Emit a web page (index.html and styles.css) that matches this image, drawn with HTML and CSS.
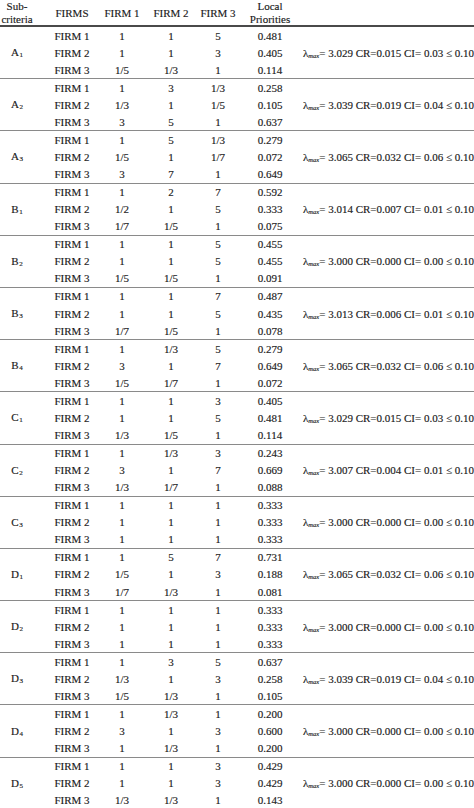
FILE: index.html
```html
<!DOCTYPE html>
<html>
<head>
<meta charset="utf-8">
<link rel="stylesheet" href="styles.css">
</head>
<body>
<div class="table">
  <div class="head">
    <div class="c sub"><span>Sub-<br>criteria</span></div>
    <div class="c">FIRMS</div>
    <div class="c">FIRM 1</div>
    <div class="c">FIRM 2</div>
    <div class="c">FIRM 3</div>
    <div class="c">Local<br>Priorities</div>
    <div></div>
  </div>

  <div class="group">
    <div class="c sub crit"><span>A<span class="sb">1</span></span></div>
    <div class="c">FIRM 1</div><div class="c">1</div><div class="c">1</div><div class="c">5</div><div class="c">0.481</div>
    <div class="lam"><span>λ<span class="mx">max</span>= 3.029 CR=0.015 CI= 0.03 ≤ 0.10</span></div>
    <div class="c">FIRM 2</div><div class="c">1</div><div class="c">1</div><div class="c">3</div><div class="c">0.405</div>
    <div class="c">FIRM 3</div><div class="c">1/5</div><div class="c">1/3</div><div class="c">1</div><div class="c">0.114</div>
  </div>

  <div class="group">
    <div class="c sub crit"><span>A<span class="sb">2</span></span></div>
    <div class="c">FIRM 1</div><div class="c">1</div><div class="c">3</div><div class="c">1/3</div><div class="c">0.258</div>
    <div class="lam"><span>λ<span class="mx">max</span>= 3.039 CR=0.019 CI= 0.04 ≤ 0.10</span></div>
    <div class="c">FIRM 2</div><div class="c">1/3</div><div class="c">1</div><div class="c">1/5</div><div class="c">0.105</div>
    <div class="c">FIRM 3</div><div class="c">3</div><div class="c">5</div><div class="c">1</div><div class="c">0.637</div>
  </div>

  <div class="group">
    <div class="c sub crit"><span>A<span class="sb">3</span></span></div>
    <div class="c">FIRM 1</div><div class="c">1</div><div class="c">5</div><div class="c">1/3</div><div class="c">0.279</div>
    <div class="lam"><span>λ<span class="mx">max</span>= 3.065 CR=0.032 CI= 0.06 ≤ 0.10</span></div>
    <div class="c">FIRM 2</div><div class="c">1/5</div><div class="c">1</div><div class="c">1/7</div><div class="c">0.072</div>
    <div class="c">FIRM 3</div><div class="c">3</div><div class="c">7</div><div class="c">1</div><div class="c">0.649</div>
  </div>

  <div class="group">
    <div class="c sub crit"><span>B<span class="sb">1</span></span></div>
    <div class="c">FIRM 1</div><div class="c">1</div><div class="c">2</div><div class="c">7</div><div class="c">0.592</div>
    <div class="lam"><span>λ<span class="mx">max</span>= 3.014 CR=0.007 CI= 0.01 ≤ 0.10</span></div>
    <div class="c">FIRM 2</div><div class="c">1/2</div><div class="c">1</div><div class="c">5</div><div class="c">0.333</div>
    <div class="c">FIRM 3</div><div class="c">1/7</div><div class="c">1/5</div><div class="c">1</div><div class="c">0.075</div>
  </div>

  <div class="group">
    <div class="c sub crit"><span>B<span class="sb">2</span></span></div>
    <div class="c">FIRM 1</div><div class="c">1</div><div class="c">1</div><div class="c">5</div><div class="c">0.455</div>
    <div class="lam"><span>λ<span class="mx">max</span>= 3.000 CR=0.000 CI= 0.00 ≤ 0.10</span></div>
    <div class="c">FIRM 2</div><div class="c">1</div><div class="c">1</div><div class="c">5</div><div class="c">0.455</div>
    <div class="c">FIRM 3</div><div class="c">1/5</div><div class="c">1/5</div><div class="c">1</div><div class="c">0.091</div>
  </div>

  <div class="group">
    <div class="c sub crit"><span>B<span class="sb">3</span></span></div>
    <div class="c">FIRM 1</div><div class="c">1</div><div class="c">1</div><div class="c">7</div><div class="c">0.487</div>
    <div class="lam"><span>λ<span class="mx">max</span>= 3.013 CR=0.006 CI= 0.01 ≤ 0.10</span></div>
    <div class="c">FIRM 2</div><div class="c">1</div><div class="c">1</div><div class="c">5</div><div class="c">0.435</div>
    <div class="c">FIRM 3</div><div class="c">1/7</div><div class="c">1/5</div><div class="c">1</div><div class="c">0.078</div>
  </div>

  <div class="group">
    <div class="c sub crit"><span>B<span class="sb">4</span></span></div>
    <div class="c">FIRM 1</div><div class="c">1</div><div class="c">1/3</div><div class="c">5</div><div class="c">0.279</div>
    <div class="lam"><span>λ<span class="mx">max</span>= 3.065 CR=0.032 CI= 0.06 ≤ 0.10</span></div>
    <div class="c">FIRM 2</div><div class="c">3</div><div class="c">1</div><div class="c">7</div><div class="c">0.649</div>
    <div class="c">FIRM 3</div><div class="c">1/5</div><div class="c">1/7</div><div class="c">1</div><div class="c">0.072</div>
  </div>

  <div class="group">
    <div class="c sub crit"><span>C<span class="sb">1</span></span></div>
    <div class="c">FIRM 1</div><div class="c">1</div><div class="c">1</div><div class="c">3</div><div class="c">0.405</div>
    <div class="lam"><span>λ<span class="mx">max</span>= 3.029 CR=0.015 CI= 0.03 ≤ 0.10</span></div>
    <div class="c">FIRM 2</div><div class="c">1</div><div class="c">1</div><div class="c">5</div><div class="c">0.481</div>
    <div class="c">FIRM 3</div><div class="c">1/3</div><div class="c">1/5</div><div class="c">1</div><div class="c">0.114</div>
  </div>

  <div class="group">
    <div class="c sub crit"><span>C<span class="sb">2</span></span></div>
    <div class="c">FIRM 1</div><div class="c">1</div><div class="c">1/3</div><div class="c">3</div><div class="c">0.243</div>
    <div class="lam"><span>λ<span class="mx">max</span>= 3.007 CR=0.004 CI= 0.01 ≤ 0.10</span></div>
    <div class="c">FIRM 2</div><div class="c">3</div><div class="c">1</div><div class="c">7</div><div class="c">0.669</div>
    <div class="c">FIRM 3</div><div class="c">1/3</div><div class="c">1/7</div><div class="c">1</div><div class="c">0.088</div>
  </div>

  <div class="group">
    <div class="c sub crit"><span>C<span class="sb">3</span></span></div>
    <div class="c">FIRM 1</div><div class="c">1</div><div class="c">1</div><div class="c">1</div><div class="c">0.333</div>
    <div class="lam"><span>λ<span class="mx">max</span>= 3.000 CR=0.000 CI= 0.00 ≤ 0.10</span></div>
    <div class="c">FIRM 2</div><div class="c">1</div><div class="c">1</div><div class="c">1</div><div class="c">0.333</div>
    <div class="c">FIRM 3</div><div class="c">1</div><div class="c">1</div><div class="c">1</div><div class="c">0.333</div>
  </div>

  <div class="group">
    <div class="c sub crit"><span>D<span class="sb">1</span></span></div>
    <div class="c">FIRM 1</div><div class="c">1</div><div class="c">5</div><div class="c">7</div><div class="c">0.731</div>
    <div class="lam"><span>λ<span class="mx">max</span>= 3.065 CR=0.032 CI= 0.06 ≤ 0.10</span></div>
    <div class="c">FIRM 2</div><div class="c">1/5</div><div class="c">1</div><div class="c">3</div><div class="c">0.188</div>
    <div class="c">FIRM 3</div><div class="c">1/7</div><div class="c">1/3</div><div class="c">1</div><div class="c">0.081</div>
  </div>

  <div class="group">
    <div class="c sub crit"><span>D<span class="sb">2</span></span></div>
    <div class="c">FIRM 1</div><div class="c">1</div><div class="c">1</div><div class="c">1</div><div class="c">0.333</div>
    <div class="lam"><span>λ<span class="mx">max</span>= 3.000 CR=0.000 CI= 0.00 ≤ 0.10</span></div>
    <div class="c">FIRM 2</div><div class="c">1</div><div class="c">1</div><div class="c">1</div><div class="c">0.333</div>
    <div class="c">FIRM 3</div><div class="c">1</div><div class="c">1</div><div class="c">1</div><div class="c">0.333</div>
  </div>

  <div class="group">
    <div class="c sub crit"><span>D<span class="sb">3</span></span></div>
    <div class="c">FIRM 1</div><div class="c">1</div><div class="c">3</div><div class="c">5</div><div class="c">0.637</div>
    <div class="lam"><span>λ<span class="mx">max</span>= 3.039 CR=0.019 CI= 0.04 ≤ 0.10</span></div>
    <div class="c">FIRM 2</div><div class="c">1/3</div><div class="c">1</div><div class="c">3</div><div class="c">0.258</div>
    <div class="c">FIRM 3</div><div class="c">1/5</div><div class="c">1/3</div><div class="c">1</div><div class="c">0.105</div>
  </div>

  <div class="group">
    <div class="c sub crit"><span>D<span class="sb">4</span></span></div>
    <div class="c">FIRM 1</div><div class="c">1</div><div class="c">1/3</div><div class="c">1</div><div class="c">0.200</div>
    <div class="lam"><span>λ<span class="mx">max</span>= 3.000 CR=0.000 CI= 0.00 ≤ 0.10</span></div>
    <div class="c">FIRM 2</div><div class="c">3</div><div class="c">1</div><div class="c">3</div><div class="c">0.600</div>
    <div class="c">FIRM 3</div><div class="c">1</div><div class="c">1/3</div><div class="c">1</div><div class="c">0.200</div>
  </div>

  <div class="group last">
    <div class="c sub crit"><span>D<span class="sb">5</span></span></div>
    <div class="c">FIRM 1</div><div class="c">1</div><div class="c">1</div><div class="c">3</div><div class="c">0.429</div>
    <div class="lam"><span>λ<span class="mx">max</span>= 3.000 CR=0.000 CI= 0.00 ≤ 0.10</span></div>
    <div class="c">FIRM 2</div><div class="c">1</div><div class="c">1</div><div class="c">3</div><div class="c">0.429</div>
    <div class="c">FIRM 3</div><div class="c">1/3</div><div class="c">1/3</div><div class="c">1</div><div class="c">0.143</div>
  </div>
</div>
</body>
</html>
```

FILE: styles.css
```css
html, body {
  margin: 0;
  padding: 0;
  background: #ffffff;
  overflow: hidden;
}
body {
  width: 474px;
  height: 808px;
  font-family: "Liberation Serif", "Times New Roman", serif;
  font-size: 11px;
  color: #1a1a1a;
  -webkit-text-stroke: 0.15px #1a1a1a;
}
.table {
  display: flex;
  flex-direction: column;
}
.head, .group {
  display: grid;
  grid-template-columns: 44px 56px 44px 54px 40px 64px 1fr;
}
.head {
  height: 25px;
  border-bottom: 2px solid #4a4a4a;
  line-height: 13px;
  align-items: center;
}
.group {
  height: 52.2px;
  box-sizing: border-box;
  border-bottom: 1.5px solid #8a8a8a;
  grid-template-rows: repeat(3, 1fr);
  align-items: center;
}
.c {
  display: flex;
  justify-content: center;
  text-align: center;
  white-space: nowrap;
}
.sub {
  padding-right: 10px;
}
.crit {
  grid-row: 1 / 4;
  grid-column: 1;
}
.sb {
  font-size: 7px;
  vertical-align: -1px;
  margin-left: 0.5px;
}
.lam {
  grid-row: 1 / 4;
  grid-column: 7;
  padding-left: 1px;
  white-space: nowrap;
}
.mx {
  font-size: 6.5px;
  font-style: italic;
  vertical-align: -1px;
}
```
